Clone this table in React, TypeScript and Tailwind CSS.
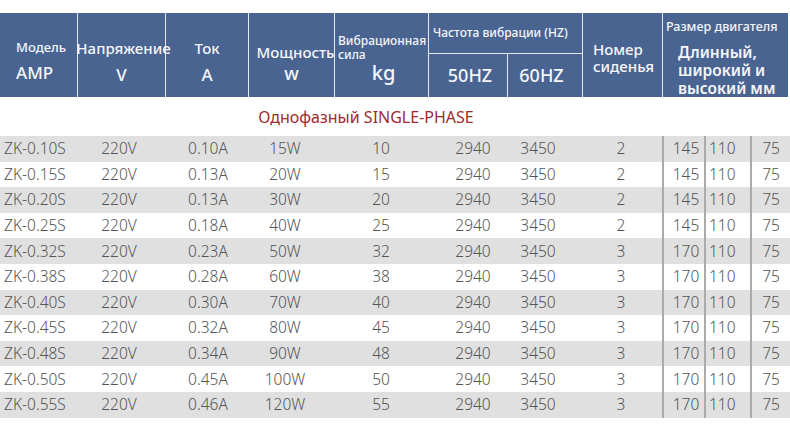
import React from 'react';

const rows = [
  ['ZK-0.10S', '220V', '0.10A', '15W', '10', '2940', '3450', '2', '145', '110', '75'],
  ['ZK-0.15S', '220V', '0.13A', '20W', '15', '2940', '3450', '2', '145', '110', '75'],
  ['ZK-0.20S', '220V', '0.13A', '30W', '20', '2940', '3450', '2', '145', '110', '75'],
  ['ZK-0.25S', '220V', '0.18A', '40W', '25', '2940', '3450', '2', '145', '110', '75'],
  ['ZK-0.32S', '220V', '0.23A', '50W', '32', '2940', '3450', '3', '170', '110', '75'],
  ['ZK-0.38S', '220V', '0.28A', '60W', '38', '2940', '3450', '3', '170', '110', '75'],
  ['ZK-0.40S', '220V', '0.30A', '70W', '40', '2940', '3450', '3', '170', '110', '75'],
  ['ZK-0.45S', '220V', '0.32A', '80W', '45', '2940', '3450', '3', '170', '110', '75'],
  ['ZK-0.48S', '220V', '0.34A', '90W', '48', '2940', '3450', '3', '170', '110', '75'],
  ['ZK-0.50S', '220V', '0.45A', '100W', '50', '2940', '3450', '3', '170', '110', '75'],
  ['ZK-0.55S', '220V', '0.46A', '120W', '55', '2940', '3450', '3', '170', '110', '75'],
];

export default function App() {
  return (
    <div
      className="w-[790px] h-[426px] bg-white overflow-hidden pt-[13px]"
      style={{ fontFamily: '"Noto Sans", "Liberation Sans", sans-serif' }}
    >
      {/* header */}
      <div className="grid grid-cols-[77px_88px_83px_86px_94px_154px_80px_126px] w-[788px] h-[84px] bg-[#4a6491] text-[#f4f6fa] font-medium">
        <div className="flex flex-col pl-4 pt-[26px]">
          <span className="text-[13px] leading-[16px]">Модель</span>
          <span className="text-[17px] leading-[20px] mt-[8px]">AMP</span>
        </div>
        <div className="flex flex-col items-center pt-[26px] border-l border-white/85">
          <span className="text-[15px] leading-[18px] whitespace-nowrap pl-1">Напряжение</span>
          <span className="text-[17px] leading-[20px] mt-[8px]">V</span>
        </div>
        <div className="flex flex-col items-center pt-[26px] border-l border-white/85">
          <span className="text-[15px] leading-[18px]">Ток</span>
          <span className="text-[17px] leading-[20px] mt-[8px]">A</span>
        </div>
        <div className="flex flex-col items-center pt-[30px] border-l border-white/85">
          <span className="text-[15px] leading-[18px] whitespace-nowrap pl-2">Мощность</span>
          <span className="text-[18px] leading-[20px] mt-[2px]">w</span>
        </div>
        <div className="flex flex-col pt-[21px] border-l border-white/85">
          <span className="text-[12px] leading-[14px] pl-[3px] whitespace-nowrap">Вибрационная</span>
          <span className="text-[12px] leading-[14px] pl-[3px]">сила</span>
          <span className="text-[20px] leading-[22px] text-center pl-1">kg</span>
        </div>
        <div className="flex flex-col border-l border-white/85">
          <div className="h-[41px] flex items-center pl-1 pb-[1px] border-b border-white/85">
            <span className="text-[12px] leading-[14px] whitespace-nowrap">Частота вибрации (HZ)</span>
          </div>
          <div className="flex-1 grid grid-cols-[78px_76px]">
            <div className="flex items-center justify-center pl-1 text-[18px]">50HZ</div>
            <div className="flex items-center justify-center border-l border-white/85 text-[18px] pr-2">60HZ</div>
          </div>
        </div>
        <div className="flex flex-col pl-[10px] pt-[28px] border-l border-white/85 text-[15px] leading-[17px]">
          <span>Номер</span>
          <span>сиденья</span>
        </div>
        <div className="flex flex-col pt-[7px] border-l border-white/85">
          <span className="text-[12.5px] leading-[14px] pl-[3px] whitespace-nowrap">Размер двигателя</span>
          <div className="flex flex-col pl-[15px] mt-[9px] text-[15.5px] leading-[18px] font-semibold">
            <span>Длинный,</span>
            <span>широкий и</span>
            <span>высокий мм</span>
          </div>
        </div>
      </div>

      {/* subtitle */}
      <div className="h-[39px] flex items-center justify-center text-[16px] text-[#a12a2e] pr-[58px]">
        Однофазный SINGLE-PHASE
      </div>

      {/* body */}
      <div className="text-[15.5px] text-[#555] font-light">
        {rows.map((r, i) => (
          <div
            key={r[0]}
            className={`grid grid-cols-[80px_78px_100px_54px_138px_46px_84px_82px_42px_46px_40px] h-[25.6px] items-stretch ${
              i % 2 === 0 ? 'bg-[#e0e0e0]' : 'bg-white'
            }`}
          >
            <div className="flex items-center pl-1 whitespace-nowrap">{r[0]}</div>
            <div className="flex items-center justify-center">{r[1]}</div>
            <div className="flex items-center justify-center">{r[2]}</div>
            <div className="flex items-center justify-center">{r[3]}</div>
            <div className="flex items-center justify-center">{r[4]}</div>
            <div className="flex items-center justify-center">{r[5]}</div>
            <div className="flex items-center justify-center">{r[6]}</div>
            <div className="flex items-center justify-center">{r[7]}</div>
            <div className="flex items-center justify-center pl-1 border-l-2 border-[#ababab]">{r[8]}</div>
            <div className="flex items-center pl-[3px] border-l-2 border-[#ababab]">{r[9]}</div>
            <div className="flex items-center justify-center border-l-2 border-[#ababab]">{r[10]}</div>
          </div>
        ))}
      </div>
    </div>
  );
}
